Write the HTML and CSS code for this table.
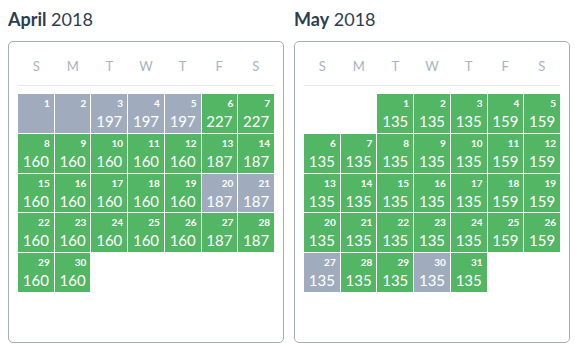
FILE: index.html
```html
<!DOCTYPE html>
<html>
<head>
<meta charset="utf-8">
<link rel="stylesheet" href="styles.css">
</head>
<body>
<div class="months">
  <section class="month">
    <h2 class="title"><b>April</b> 2018</h2>
    <div class="card">
      <div class="weekdays"><span>S</span><span>M</span><span>T</span><span>W</span><span>T</span><span>F</span><span>S</span></div>
      <div class="grid">
        <div class="day off"><span class="num">1</span><span class="price"></span></div>
        <div class="day off"><span class="num">2</span><span class="price"></span></div>
        <div class="day off"><span class="num">3</span><span class="price">197</span></div>
        <div class="day off"><span class="num">4</span><span class="price">197</span></div>
        <div class="day off"><span class="num">5</span><span class="price">197</span></div>
        <div class="day on"><span class="num">6</span><span class="price">227</span></div>
        <div class="day on"><span class="num">7</span><span class="price">227</span></div>
        <div class="day on"><span class="num">8</span><span class="price">160</span></div>
        <div class="day on"><span class="num">9</span><span class="price">160</span></div>
        <div class="day on"><span class="num">10</span><span class="price">160</span></div>
        <div class="day on"><span class="num">11</span><span class="price">160</span></div>
        <div class="day on"><span class="num">12</span><span class="price">160</span></div>
        <div class="day on"><span class="num">13</span><span class="price">187</span></div>
        <div class="day on"><span class="num">14</span><span class="price">187</span></div>
        <div class="day on"><span class="num">15</span><span class="price">160</span></div>
        <div class="day on"><span class="num">16</span><span class="price">160</span></div>
        <div class="day on"><span class="num">17</span><span class="price">160</span></div>
        <div class="day on"><span class="num">18</span><span class="price">160</span></div>
        <div class="day on"><span class="num">19</span><span class="price">160</span></div>
        <div class="day off"><span class="num">20</span><span class="price">187</span></div>
        <div class="day off"><span class="num">21</span><span class="price">187</span></div>
        <div class="day on"><span class="num">22</span><span class="price">160</span></div>
        <div class="day on"><span class="num">23</span><span class="price">160</span></div>
        <div class="day on"><span class="num">24</span><span class="price">160</span></div>
        <div class="day on"><span class="num">25</span><span class="price">160</span></div>
        <div class="day on"><span class="num">26</span><span class="price">160</span></div>
        <div class="day on"><span class="num">27</span><span class="price">187</span></div>
        <div class="day on"><span class="num">28</span><span class="price">187</span></div>
        <div class="day on"><span class="num">29</span><span class="price">160</span></div>
        <div class="day on"><span class="num">30</span><span class="price">160</span></div>
      </div>
    </div>
  </section>
  <section class="month">
    <h2 class="title"><b>May</b> 2018</h2>
    <div class="card">
      <div class="weekdays"><span>S</span><span>M</span><span>T</span><span>W</span><span>T</span><span>F</span><span>S</span></div>
      <div class="grid">
        <div class="day empty"></div>
        <div class="day empty"></div>
        <div class="day on"><span class="num">1</span><span class="price">135</span></div>
        <div class="day on"><span class="num">2</span><span class="price">135</span></div>
        <div class="day on"><span class="num">3</span><span class="price">135</span></div>
        <div class="day on"><span class="num">4</span><span class="price">159</span></div>
        <div class="day on"><span class="num">5</span><span class="price">159</span></div>
        <div class="day on"><span class="num">6</span><span class="price">135</span></div>
        <div class="day on"><span class="num">7</span><span class="price">135</span></div>
        <div class="day on"><span class="num">8</span><span class="price">135</span></div>
        <div class="day on"><span class="num">9</span><span class="price">135</span></div>
        <div class="day on"><span class="num">10</span><span class="price">135</span></div>
        <div class="day on"><span class="num">11</span><span class="price">159</span></div>
        <div class="day on"><span class="num">12</span><span class="price">159</span></div>
        <div class="day on"><span class="num">13</span><span class="price">135</span></div>
        <div class="day on"><span class="num">14</span><span class="price">135</span></div>
        <div class="day on"><span class="num">15</span><span class="price">135</span></div>
        <div class="day on"><span class="num">16</span><span class="price">135</span></div>
        <div class="day on"><span class="num">17</span><span class="price">135</span></div>
        <div class="day on"><span class="num">18</span><span class="price">159</span></div>
        <div class="day on"><span class="num">19</span><span class="price">159</span></div>
        <div class="day on"><span class="num">20</span><span class="price">135</span></div>
        <div class="day on"><span class="num">21</span><span class="price">135</span></div>
        <div class="day on"><span class="num">22</span><span class="price">135</span></div>
        <div class="day on"><span class="num">23</span><span class="price">135</span></div>
        <div class="day on"><span class="num">24</span><span class="price">135</span></div>
        <div class="day on"><span class="num">25</span><span class="price">159</span></div>
        <div class="day on"><span class="num">26</span><span class="price">159</span></div>
        <div class="day off"><span class="num">27</span><span class="price">135</span></div>
        <div class="day on"><span class="num">28</span><span class="price">135</span></div>
        <div class="day on"><span class="num">29</span><span class="price">135</span></div>
        <div class="day off"><span class="num">30</span><span class="price">135</span></div>
        <div class="day on"><span class="num">31</span><span class="price">135</span></div>
      </div>
    </div>
  </section>
</div>
</body>
</html>
```

FILE: styles.css
```css
html, body {
  margin: 0;
  padding: 0;
  background: #fff;
}
body {
  font-family: Lato, "Open Sans", sans-serif;
  color: #2c3d52;
}
.months {
  display: flex;
  gap: 10px;
  padding: 0 0 0 8px;
}
.month {
  width: 276px;
  display: flex;
  flex-direction: column;
}
.title {
  margin: 0;
  padding-top: 8px;
  height: 41px;
  box-sizing: border-box;
  font-size: 18px;
  line-height: 22px;
  font-weight: 400;
  color: #2c3d52;
}
.title b {
  font-weight: 700;
}
.card {
  box-sizing: border-box;
  height: 302px;
  border: 1px solid #a3adbb;
  border-radius: 5px;
  padding: 0 9px;
}
.weekdays {
  display: grid;
  grid-template-columns: repeat(7, 1fr);
  height: 44px;
  box-sizing: border-box;
  border-bottom: 1px solid #e6e9ed;
  align-items: center;
  padding-top: 4px;
  font-size: 13px;
  color: #a9b3c1;
  text-align: center;
}
.grid {
  margin-top: 8px;
  display: grid;
  grid-template-columns: repeat(7, 1fr);
  grid-auto-rows: 38.8px;
  gap: 1px 1px;
}
.day {
  display: flex;
  flex-direction: column;
  color: #fff;
  padding: 3px 4px 0 4px;
  box-sizing: border-box;
}
.day.on { background: #52b664; }
.day.off { background: #a0acbe; }
.day.empty { background: transparent; }
.num {
  text-align: right;
  font-size: 10px;
  font-weight: 700;
  line-height: 12px;
}
.price {
  text-align: center;
  font-size: 15px;
  line-height: 18px;
  margin-top: 3px;
}
```
